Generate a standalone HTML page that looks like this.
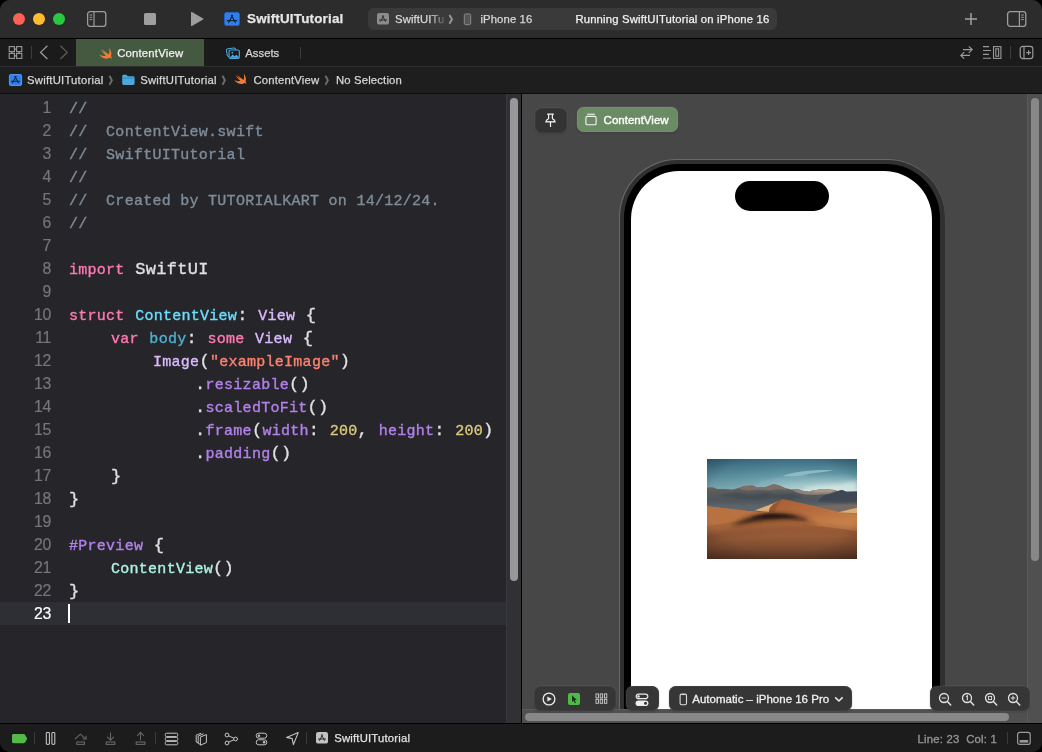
<!DOCTYPE html>
<html>
<head>
<meta charset="utf-8">
<title>Xcode</title>
<style>
html,body{margin:0;padding:0;background:#000;}
body{width:1042px;height:752px;overflow:hidden;position:relative;font-family:"Liberation Sans",sans-serif;}
#win{will-change:transform;position:absolute;left:0;top:0;width:1042px;height:752px;border-radius:10px;overflow:hidden;background:#1c1c1c;}
.abs{position:absolute;}
#titlebar{left:0;top:0;width:1042px;height:38px;background:#2c2c2c;}
#tabbar{left:0;top:39px;width:1042px;height:27px;background:#1b1b1b;}
#jumpbar{left:0;top:67px;width:1042px;height:26px;background:#1e1e1e;}
.hl{background:#000;}
.t{position:absolute;white-space:nowrap;color:#dcdcdc;font-size:11.3px;line-height:14px;-webkit-text-stroke:0.25px currentColor;}
#editor{left:0;top:94px;width:506px;height:630px;background:#25252a;}
#code{position:absolute;left:69px;top:96.5px;font-family:"Liberation Mono",monospace;font-size:17px;letter-spacing:0.3px;line-height:23px;color:#e0e0e0;white-space:pre;-webkit-text-stroke:0.36px currentColor;}
.ln{height:23px;line-height:23px;overflow:visible;}
#code span{font-size:15px;letter-spacing:0.27px;}
#nums{position:absolute;left:0;top:95.9px;width:51px;text-align:right;font-family:"Liberation Sans",sans-serif;font-size:15.8px;letter-spacing:-0.3px;line-height:23px;color:#75757a;white-space:pre;-webkit-text-stroke:0.2px currentColor;}
.c{color:#7f8c98}.k{color:#ff7ab2}.s{color:#ff8170}.n{color:#d9c97c}.td{color:#6bdfff}.od{color:#4eb0cc}.pc{color:#acf2e4}.oc{color:#dabaff}.of{color:#b281eb}
#canvas{left:523px;top:94px;width:519px;height:630px;background:#474747;overflow:hidden;}
.grp{position:absolute;background:#363636;border:1px solid #3d3d3d;border-radius:6.5px;box-sizing:border-box;box-shadow:0 0 0 0.5px rgba(255,255,255,0.10), 0 1px 2px rgba(0,0,0,0.25);}
</style>
</head>
<body>
<div id="win">
  <!-- TITLE BAR -->
  <div id="titlebar" class="abs"></div>
  <div class="abs hl" style="left:0;top:38px;width:1042px;height:1px;"></div>
  <div id="tabbar" class="abs"></div>
  <div class="abs" style="left:0;top:66px;width:1042px;height:1px;background:#2f2f2f;"></div>
  <div id="jumpbar" class="abs"></div>
  <div class="abs" style="left:0;top:93px;width:1042px;height:1px;background:#0c0c0c;"></div>


  <!-- traffic lights -->
  <div class="abs" style="left:13px;top:13px;width:12px;height:12px;border-radius:50%;background:#fe5f57;"></div>
  <div class="abs" style="left:33px;top:13px;width:12px;height:12px;border-radius:50%;background:#febc2e;"></div>
  <div class="abs" style="left:53px;top:13px;width:12px;height:12px;border-radius:50%;background:#28c840;"></div>
  <!-- sidebar icon -->
  <svg class="abs" style="left:86px;top:10px;" width="22" height="18" viewBox="0 0 22 18"><rect x="1.6" y="1.7" width="18.2" height="14.6" rx="2.6" fill="none" stroke="#9d9d9d" stroke-width="1.3"/><line x1="8" y1="1.7" x2="8" y2="16.3" stroke="#9d9d9d" stroke-width="1.2"/><g stroke="#9d9d9d" stroke-width="1"><line x1="3.6" y1="5" x2="6.2" y2="5"/><line x1="3.6" y1="7.3" x2="6.2" y2="7.3"/><line x1="3.6" y1="9.6" x2="6.2" y2="9.6"/></g></svg>
  <!-- stop -->
  <div class="abs" style="left:144px;top:13px;width:12px;height:12px;border-radius:1.5px;background:#9f9f9f;"></div>
  <!-- play -->
  <svg class="abs" style="left:189px;top:10px;" width="18" height="18" viewBox="0 0 18 18"><path d="M2.6 2.6 L13.8 9 L2.6 15.4 Z" fill="#9f9f9f" stroke="#9f9f9f" stroke-width="1.2" stroke-linejoin="round"/></svg>
  <!-- app icon -->
  <svg class="abs" style="left:224px;top:12px;" width="16" height="14" viewBox="0 0 16 14"><rect x="0.5" y="0.5" width="15" height="13" rx="2" fill="#2f80ec" stroke="#1f62c4" stroke-width="1"/><g stroke="#10233f" stroke-width="1.15" fill="none" stroke-linecap="round"><path d="M8.6 3.2 L4.6 10.6"/><path d="M7.4 3.2 L11.4 10.6"/><path d="M3.2 8.6 L12.8 8.6"/></g></svg>
  <div class="t" style="left:247px;top:11px;font-size:13.4px;line-height:16px;font-weight:bold;color:#e6e6e6;letter-spacing:0.2px;">SwiftUITutorial</div>
  <!-- pill -->
  <div class="abs" style="left:368px;top:8px;width:409px;height:22px;border-radius:6px;background:#3a3a3a;"></div>
  <svg class="abs" style="left:377px;top:13px;" width="12" height="12" viewBox="0 0 12 12"><rect x="0" y="0" width="12" height="11.6" rx="2.2" fill="#8c8c8c"/><g stroke="#2e2e2e" stroke-width="1" fill="none" stroke-linecap="round"><path d="M6.5 2.8 L3.5 8.4"/><path d="M5.5 2.8 L8.5 8.4"/><path d="M2.4 7 L9.6 7"/></g></svg>
  <div class="t" style="left:395px;top:12px;letter-spacing:0.1px;color:#d8d8d8;width:50px;overflow:hidden;-webkit-mask-image:linear-gradient(90deg,#000 70%,rgba(0,0,0,0.15) 100%);">SwiftUITu</div>
  <svg class="abs" style="left:447px;top:14px;" width="8" height="11" viewBox="0 0 8 11"><path d="M2.4 0.9 L5 5.3 L2.4 9.7" fill="none" stroke="#959595" stroke-width="2"/></svg>
  <svg class="abs" style="left:463px;top:13px;" width="9" height="13" viewBox="0 0 9 13"><rect x="1.3" y="0.9" width="6.4" height="10.8" rx="1.5" fill="#555" stroke="#8a8a8a" stroke-width="1"/></svg>
  <div class="t" style="left:480.4px;top:12px;letter-spacing:0.12px;color:#d8d8d8;">iPhone 16</div>
  <div class="t" style="left:575.4px;top:12px;letter-spacing:0.17px;color:#f2f2f2;">Running SwiftUITutorial on iPhone 16</div>
  <!-- plus -->
  <svg class="abs" style="left:964px;top:12px;" width="14" height="14" viewBox="0 0 14 14"><path d="M7 1 V12.9 M1 7 H13" stroke="#a2a2a2" stroke-width="1.5" fill="none"/></svg>
  <!-- right sidebar icon -->
  <svg class="abs" style="left:1006px;top:10px;" width="22" height="18" viewBox="0 0 22 18"><rect x="1.6" y="1.7" width="18.2" height="14.6" rx="2.6" fill="none" stroke="#9d9d9d" stroke-width="1.3"/><line x1="13.4" y1="1.7" x2="13.4" y2="16.3" stroke="#9d9d9d" stroke-width="1.2"/><g stroke="#9d9d9d" stroke-width="1"><line x1="15.2" y1="5" x2="17.8" y2="5"/><line x1="15.2" y1="7.3" x2="17.8" y2="7.3"/><line x1="15.2" y1="9.6" x2="17.8" y2="9.6"/></g></svg>

  <!-- tab bar -->
  <svg class="abs" style="left:8px;top:45px;" width="15" height="15" viewBox="0 0 15 15"><g fill="none" stroke="#9a9a9a" stroke-width="1.1"><rect x="1.2" y="1.6" width="5.2" height="5"/><rect x="8.6" y="1.6" width="5.2" height="5"/><rect x="1.2" y="8.4" width="5.2" height="5"/><rect x="8.6" y="8.4" width="5.2" height="5"/><path d="M6.4 4.1 H8.6 M6.4 10.9 H8.6 M3.8 6.6 V8.4 M11.2 6.6 V8.4"/></g></svg>
  <div class="abs" style="left:31px;top:46px;width:1px;height:13px;background:#3c3c3c;"></div>
  <svg class="abs" style="left:39px;top:45px;" width="10" height="15" viewBox="0 0 10 15"><path d="M8.4 0.8 L1.6 7.4 L8.4 14" fill="none" stroke="#9a9a9a" stroke-width="1.3"/></svg>
  <svg class="abs" style="left:59px;top:45px;" width="10" height="15" viewBox="0 0 10 15"><path d="M1.4 0.8 L8.2 7.4 L1.4 14" fill="none" stroke="#5c5c5c" stroke-width="1.3"/></svg>
  <div class="abs" style="left:76px;top:39px;width:128px;height:27px;background:#445940;"></div>
  <svg class="abs" style="left:99.4px;top:46.6px;" width="13" height="12.4" viewBox="0 0 12.6 11.2" preserveAspectRatio="none"><path d="M9.6 0.6 C12 3.2 12.4 6 11.6 8.2 C12.4 9.2 12.3 10.2 12 10.8 C11.3 9.7 10.5 9.6 10 9.8 C8.6 10.7 6.6 10.9 4.6 10.2 C2.8 9.6 1.2 8.2 0.2 6.6 C2.2 8 4.6 8.5 6.6 7.6 C4.6 6 2.8 4 1.5 2.1 C3 3.4 5.2 5 6.2 5.6 C5 4.4 3.6 2.6 2.9 1.5 C4.8 3.3 7.6 5.6 9.6 6.7 C10.4 4.8 10.3 2.6 9.6 0.6 Z" fill="#f27a32"/></svg>
  <div class="t" style="left:117.2px;top:46px;letter-spacing:0.2px;color:#f2f2f2;">ContentView</div>
  <!-- assets icon -->
  <svg class="abs" style="left:226px;top:47px;" width="14.3" height="12.4" viewBox="0 0 15 13"><rect x="0.8" y="1.4" width="9.6" height="8" rx="1.6" transform="rotate(-8 5.6 5.4)" fill="none" stroke="#4aa8dc" stroke-width="1.1"/><rect x="3.2" y="3.2" width="10.8" height="8.8" rx="1.6" fill="#1b1b1b" stroke="#4aa8dc" stroke-width="1.2"/><path d="M3.8 11.4 L7 7.8 L9 9.6 L11 8 L13.4 10.4 V11.4 Z" fill="#4aa8dc"/><circle cx="6.6" cy="6" r="0.9" fill="#4aa8dc"/></svg>
  <div class="t" style="left:245.3px;top:46px;letter-spacing:0px;color:#d4d4d4;">Assets</div>
  <div class="abs" style="left:300px;top:46.5px;width:1px;height:12.5px;background:#3c3c3c;"></div>
  <!-- right icons -->
  <svg class="abs" style="left:959px;top:45px;" width="15" height="15" viewBox="0 0 15 15"><g fill="none" stroke="#9a9a9a" stroke-width="1.15"><path d="M4 4.6 H13 M9.8 1.4 L13.2 4.6 L9.8 7.8"/><path d="M11 10.4 H2 M5.2 7.2 L1.8 10.4 L5.2 13.6"/></g></svg>
  <svg class="abs" style="left:982px;top:45px;" width="21" height="15" viewBox="0 0 21 15"><g fill="none" stroke="#9a9a9a" stroke-width="1.1"><path d="M1 1.6 H7 M1 5.5 H9 M1 9.4 H7 M1 13.3 H9"/><rect x="11.5" y="1.6" width="7.4" height="11.8"/><rect x="13.8" y="3.8" width="2.8" height="7.4"/></g></svg>
  <div class="abs" style="left:1010px;top:46px;width:1px;height:13px;background:#3c3c3c;"></div>
  <svg class="abs" style="left:1019px;top:45px;" width="15" height="15" viewBox="0 0 15 15"><g fill="none" stroke="#9a9a9a" stroke-width="1.2"><rect x="1.2" y="1.4" width="12.6" height="12.2" rx="2.6"/><path d="M5 1.4 V13.6 M9.6 5.2 V10 M7.2 7.6 H12"/></g></svg>

  <!-- jump bar -->
  <svg class="abs" style="left:8px;top:73px;" width="15" height="14" viewBox="0 0 15 14"><rect x="0.9" y="0.9" width="13.2" height="12.2" rx="2" fill="#2f80ec" stroke="#1f62c4" stroke-width="0"/><rect x="1.6" y="1.6" width="11.8" height="10.8" rx="1.4" fill="none" stroke="#6aa8f5" stroke-width="0.6"/><g stroke="#10233f" stroke-width="1.05" fill="none" stroke-linecap="round"><path d="M8 3.4 L4.6 9.8"/><path d="M7 3.4 L10.4 9.8"/><path d="M3.4 8.2 L11.6 8.2"/></g></svg>
  <div class="t" style="left:27px;top:73px;letter-spacing:0.23px;color:#d6d6d6;">SwiftUITutorial</div>
  <svg class="abs" style="left:108px;top:75px;" width="6" height="11" viewBox="0 0 6 11"><path d="M1.5 0.7 L3.9 5.3 L1.5 9.9" fill="none" stroke="#6e6e6e" stroke-width="1.9"/></svg>
  <svg class="abs" style="left:122px;top:74px;" width="13" height="12" viewBox="0 0 13 12"><path d="M0.2 2.2 C0.2 1.4 0.8 0.8 1.6 0.8 H4.4 L5.8 2.2 H11.2 C12 2.2 12.6 2.8 12.6 3.6 V9.6 C12.6 10.4 12 11 11.2 11 H1.6 C0.8 11 0.2 10.4 0.2 9.6 Z" fill="#4aa8dc"/><rect x="0.2" y="3.6" width="12.4" height="0.9" fill="#1d6a9a" opacity="0.55"/></svg>
  <div class="t" style="left:140.2px;top:73px;letter-spacing:0.23px;color:#d6d6d6;">SwiftUITutorial</div>
  <svg class="abs" style="left:221px;top:75px;" width="6" height="11" viewBox="0 0 6 11"><path d="M1.5 0.7 L3.9 5.3 L1.5 9.9" fill="none" stroke="#6e6e6e" stroke-width="1.9"/></svg>
  <svg class="abs" style="left:234.4px;top:73.2px;" width="12.6" height="11.6" viewBox="0 0 12.6 11.2" preserveAspectRatio="none"><path d="M9.6 0.6 C12 3.2 12.4 6 11.6 8.2 C12.4 9.2 12.3 10.2 12 10.8 C11.3 9.7 10.5 9.6 10 9.8 C8.6 10.7 6.6 10.9 4.6 10.2 C2.8 9.6 1.2 8.2 0.2 6.6 C2.2 8 4.6 8.5 6.6 7.6 C4.6 6 2.8 4 1.5 2.1 C3 3.4 5.2 5 6.2 5.6 C5 4.4 3.6 2.6 2.9 1.5 C4.8 3.3 7.6 5.6 9.6 6.7 C10.4 4.8 10.3 2.6 9.6 0.6 Z" fill="#f27a32"/></svg>
  <div class="t" style="left:253.5px;top:73px;letter-spacing:0.17px;color:#d6d6d6;">ContentView</div>
  <svg class="abs" style="left:324px;top:75px;" width="6" height="11" viewBox="0 0 6 11"><path d="M1.5 0.7 L3.9 5.3 L1.5 9.9" fill="none" stroke="#6e6e6e" stroke-width="1.9"/></svg>
  <div class="t" style="left:336px;top:73px;letter-spacing:0.16px;color:#d6d6d6;">No Selection</div>

  <!-- EDITOR -->
  <div id="editor" class="abs"></div>
  <div class="abs" id="curline" style="left:0;top:602px;width:506px;height:23px;background:#2d2f35;"></div>
  <div id="nums">1
2
3
4
5
6
7
8
9
10
11
12
13
14
15
16
17
18
19
20
21
22
<span style="color:#fff">23</span></div>
  <div id="code"><div class="ln"><span class="c">//</span></div><div class="ln"><span class="c">//  ContentView.swift</span></div><div class="ln"><span class="c">//  SwiftUITutorial</span></div><div class="ln"><span class="c">//</span></div><div class="ln"><span class="c">//  Created by TUTORIALKART on 14/12/24.</span></div><div class="ln"><span class="c">//</span></div><div class="ln">&nbsp;</div><div class="ln"><span class="k">import</span> SwiftUI</div><div class="ln">&nbsp;</div><div class="ln"><span class="k">struct</span> <span class="td">ContentView</span>: <span class="oc">View</span> {</div><div class="ln">    <span class="k">var</span> <span class="od">body</span>: <span class="k">some</span> <span class="oc">View</span> {</div><div class="ln">        <span class="oc">Image</span>(<span class="s">"exampleImage"</span>)</div><div class="ln">            .<span class="of">resizable</span>()</div><div class="ln">            .<span class="of">scaledToFit</span>()</div><div class="ln">            .<span class="of">frame</span>(<span class="of">width</span>: <span class="n">200</span>, <span class="of">height</span>: <span class="n">200</span>)</div><div class="ln">            .<span class="of">padding</span>()</div><div class="ln">    }</div><div class="ln">}</div><div class="ln">&nbsp;</div><div class="ln"><span class="of">#Preview</span> {</div><div class="ln">    <span class="pc">ContentView</span>()</div><div class="ln">}</div></div>
  <div class="abs" style="left:68px;top:604px;width:2px;height:19px;background:#fff;"></div>

  <!-- editor scrollbar -->
  <div class="abs" style="left:506px;top:94px;width:15px;height:630px;background:#313135;border-left:1px solid #3a3a3e;box-sizing:border-box;"></div>
  <div class="abs" style="left:510px;top:98px;width:8px;height:483px;border-radius:4px;background:#98989b;"></div>
  <div class="abs hl" style="left:521px;top:94px;width:1px;height:630px;"></div>
  <div class="abs" style="left:522px;top:94px;width:1px;height:615px;background:#474747;"></div>
  <div class="abs" style="left:522px;top:709px;width:1px;height:15px;background:#505050;border-top:1px solid #5a5a5a;box-sizing:border-box;"></div>

  <!-- CANVAS -->

  <div id="canvas" class="abs">
    <!-- pin button -->
    <div class="grp" style="left:11.5px;top:13.5px;width:32px;height:25px;background:#333;border-color:#3a3a3a;"></div>
    <svg class="abs" style="left:21px;top:19px;" width="13" height="15" viewBox="0 0 13 15"><path d="M3.6 1.2 H9.4 M4.6 1.2 V5.6 M8.4 1.2 V5.6 M4.6 5.6 C3 6.4 2 7.6 1.8 9 H11.2 C11 7.6 10 6.4 8.4 5.6" fill="none" stroke="#f0f0f0" stroke-width="1.2" stroke-linejoin="round" stroke-linecap="round"/><path d="M2.2 8.2 H10.8 L11.2 9 H1.8 Z" fill="#f0f0f0"/><path d="M6.5 9 V14" stroke="#f0f0f0" stroke-width="1.2"/></svg>
    <!-- ContentView button -->
    <div class="grp" style="left:54px;top:13.2px;width:101px;height:25.3px;background:#6b8b64;border-color:#73916c;"></div>
    <svg class="abs" style="left:62px;top:19.4px;" width="12" height="13" viewBox="0 0 12 13"><path d="M2.2 1.2 H9.8" stroke="#f4f4f4" stroke-width="1.1" fill="none"/><rect x="0.9" y="3.4" width="10.2" height="8.4" rx="1.3" fill="none" stroke="#f4f4f4" stroke-width="1.1"/></svg>
    <div class="t" style="left:80.6px;top:18.6px;font-size:11.5px;letter-spacing:0px;color:#fcfcfc;-webkit-text-stroke:0.4px currentColor;">ContentView</div>

    <!-- phone -->
    <div class="abs" style="left:96.4px;top:65.4px;width:325.8px;height:640px;border-radius:58px;background:#686868;"></div>
    <div class="abs" style="left:96.9px;top:65.9px;width:324.8px;height:640px;border-radius:57.5px;background:#303030;"></div>
    <div class="abs" style="left:100.5px;top:69.5px;width:316.4px;height:640px;border-radius:54px;background:#000;"></div>
    <div class="abs" style="left:108px;top:77.4px;width:301px;height:640px;border-radius:48px;background:#fff;"></div>
    <div class="abs" style="left:211.8px;top:87px;width:94.2px;height:29.5px;border-radius:15px;background:#000;"></div>

    <svg class="abs" style="left:184px;top:365px;" width="150" height="100" viewBox="0 0 150 100">
      <defs>
        <linearGradient id="sky" x1="0" y1="0" x2="0" y2="1"><stop offset="0" stop-color="#3b6b80"/><stop offset="0.35" stop-color="#5c93a3"/><stop offset="0.7" stop-color="#88b7be"/><stop offset="1" stop-color="#a4c9ca"/></linearGradient>
        <radialGradient id="skyl" cx="0.8" cy="0.95" r="0.6"><stop offset="0" stop-color="#d5e6e3" stop-opacity="0.95"/><stop offset="1" stop-color="#c4dcdb" stop-opacity="0"/></radialGradient>
        <linearGradient id="skyd" x1="0" y1="0" x2="1" y2="0"><stop offset="0" stop-color="#1d3f58" stop-opacity="0.22"/><stop offset="0.5" stop-color="#1d3f58" stop-opacity="0"/></linearGradient>
        <linearGradient id="mtn" x1="0" y1="0" x2="0" y2="1"><stop offset="0" stop-color="#70665f"/><stop offset="0.3" stop-color="#565a5e"/><stop offset="0.7" stop-color="#4b535b"/><stop offset="1" stop-color="#5f656a"/></linearGradient>
        <linearGradient id="sand" x1="0" y1="0" x2="0" y2="1"><stop offset="0" stop-color="#b87242"/><stop offset="0.25" stop-color="#ad693c"/><stop offset="0.55" stop-color="#9a5d37"/><stop offset="0.8" stop-color="#7a4a2f"/><stop offset="1" stop-color="#5b3625"/></linearGradient>
        <linearGradient id="dune" x1="0" y1="0" x2="1" y2="0.6"><stop offset="0" stop-color="#a45c35"/><stop offset="0.5" stop-color="#b56b3d"/><stop offset="1" stop-color="#c58049"/></linearGradient>
        <radialGradient id="vig" cx="0.5" cy="0.45" r="0.8"><stop offset="0.62" stop-color="#000" stop-opacity="0"/><stop offset="1" stop-color="#000" stop-opacity="0.3"/></radialGradient>
        <filter id="b1" x="-20%" y="-20%" width="140%" height="140%"><feGaussianBlur stdDeviation="0.5"/></filter>
        <filter id="b15" x="-20%" y="-40%" width="140%" height="180%"><feGaussianBlur stdDeviation="1.1"/></filter>
        <filter id="b2" x="-30%" y="-60%" width="160%" height="220%"><feGaussianBlur stdDeviation="2"/></filter>
        <filter id="b3" x="-30%" y="-60%" width="160%" height="220%"><feGaussianBlur stdDeviation="3.5"/></filter>
        <clipPath id="clipimg"><rect x="0" y="0" width="150" height="100"/></clipPath>
      </defs>
      <g clip-path="url(#clipimg)">
        <rect width="150" height="40" fill="url(#sky)"/>
        <rect width="150" height="40" fill="url(#skyd)"/>
        <rect width="150" height="40" fill="url(#skyl)"/>
        <path d="M76 16.5 C90 12 108 10.5 127 11 C118 13.2 106 13.8 98 15.8 C92 17.4 82 18 76 16.5 Z" fill="#a5c9d2" opacity="0.7" filter="url(#b1)"/>
        <path d="M52 24 C70 20 86 17.5 100 17" stroke="#8fbac6" stroke-width="2.5" fill="none" opacity="0.35" filter="url(#b15)"/>
        <path d="M96 30 C112 25 130 27 150 22 L150 34 L96 34 Z" fill="#d6e6e3" opacity="0.85" filter="url(#b2)"/>
        <!-- mountains -->
        <path d="M0 28.5 L5.7 28.2 L10.3 30 L18 30 L25.7 30.5 L31.8 28.9 L36.5 27.1 L45.7 26.6 L50.3 28.5 L59.5 27.8 L66.5 25.1 L71.8 26.3 L78 28.9 L84.2 30.5 L90.3 30 L96.5 32 L102.6 32.8 L105.7 31.5 L116.5 30 L127.2 30.9 L130.3 32 L134.9 30.9 L139.5 32.8 L150 32.5 L150 56 L0 56 Z" fill="url(#mtn)"/>
        <path d="M31.8 28.9 L36.5 27.1 L45.7 26.6 L50.3 28.5 L59.5 27.8 L66.5 25.1 L71.8 26.3 L78 28.9 L80 31 L70 30 L62 31.5 L52 30.5 L42 31.5 L34 30.5 Z" fill="#80716a" opacity="0.9" filter="url(#b1)"/>
        <path d="M84 30.6 L90.3 30 L96.5 32 L102.6 32.8 L105.7 31.5 L116.5 30 L127.2 30.9 L130 32 L126 34.5 L110 35.8 L98 35.5 L90 33.5 Z" fill="#93857b" opacity="0.95" filter="url(#b1)"/>
        <path d="M104 31.8 L116.5 30 L127 31 L124 33 L108 33.6 Z" fill="#a89a8c" opacity="0.9" filter="url(#b1)"/>
        <path d="M116 37 L128 33 L134.9 30.9 L139.5 32.8 L150 32.5 L150 46 L110 43 Z" fill="#3c4752" opacity="0.95" filter="url(#b1)"/>
        <path d="M10 36 L30 33.5 L44 36 L58 33 L70 35.5 L84 34 L96 38 L84 40.5 L66 39 L50 41 L30 39.5 Z" fill="#3b444e" opacity="0.55" filter="url(#b15)"/>
        <path d="M0 33 L12 31.5 L22 33.5 L12 35.5 L0 36 Z" fill="#5d5a5a" opacity="0.6" filter="url(#b1)"/>
        <rect x="-5" y="44.5" width="160" height="8" fill="#62676d" opacity="0.9" filter="url(#b2)"/>
        <path d="M100 47.5 L150 44.5 L150 52 L122 53 Z" fill="#7a6c63" opacity="0.85" filter="url(#b15)"/>
        <!-- sand base -->
        <path d="M0 47.2 L18 49.3 L41 52 L60 53.2 L150 53.2 L150 100 L0 100 Z" fill="url(#sand)"/>
        <!-- main dune right face -->
        <path d="M75.7 40.3 C88 42.6 108 47.5 133 53 L150 56 L150 72 L58 60 L61 50 C63 46 68 43 75.7 40.3 Z" fill="url(#dune)"/>
        <path d="M62 53 C61.5 49 65 44.5 75.7 40.3 C72 44 68.5 48 68 53 Z" fill="#8a4b2c" opacity="0.55" filter="url(#b1)"/>
        <!-- lit left face -->
        <path d="M75.7 40.3 C70 43 58 48 47.5 51.3 L56 52.6 L62 53 C61.5 49 65 44.5 75.7 40.3 Z" fill="#ddb07b"/>
        <!-- right small lit dune -->
        <path d="M131 53.2 C139 51.4 146 49.8 150 48.8 L150 54.2 Z" fill="#d9ac77"/>
        <!-- left dune -->
        <path d="M0 47.2 L18 49.3 L41 52 L62 53.4 L44 60 L0 67 Z" fill="#b97342" opacity="0.95" filter="url(#b1)"/>
        <!-- shadow band -->
        <path d="M24 67 C36 59.5 50 54.6 66 54.4 C82 54.2 96 57 110 64.5 C96 61 82 60.2 70 60.8 C54 61.6 40 64 24 67 Z" fill="#2b1d19" opacity="0.95" filter="url(#b2)"/>
        <path d="M44 58.8 C54 54.8 70 54 90 57.4 C78 58 58 58.6 44 58.8 Z" fill="#1c1210" opacity="0.85" filter="url(#b15)"/>
        <!-- lighter swath + lower sweep -->
        <path d="M-5 72 C30 82 90 76 155 71 L155 65 C100 71 40 72 -5 66 Z" fill="#c07d4a" opacity="0.3" filter="url(#b3)"/>
        <path d="M-5 74 C30 69 80 66 155 70 L155 75 C90 72 40 75 -5 82 Z" fill="#63392a" opacity="0.45" filter="url(#b3)"/>
        <path d="M100 58 C120 58 140 60 155 63 L155 70 C135 66 115 63 100 63 Z" fill="#c98550" opacity="0.45" filter="url(#b2)"/>
        <rect width="150" height="100" fill="url(#vig)"/>
      </g>
    </svg>

    <!-- scroll tracks -->
    <div class="abs" style="left:0;top:615px;width:519px;height:15px;background:#505050;border-top:1px solid #5a5a5a;box-sizing:border-box;"></div>
    <div class="abs" style="left:504px;top:0;width:15px;height:630px;background:#505050;border-left:1px solid #5a5a5a;box-sizing:border-box;"></div>
    <div class="abs" style="left:2px;top:619px;width:484px;height:8px;border-radius:4px;background:#888;"></div>
    <div class="abs" style="left:508px;top:4px;width:8px;height:463px;border-radius:4px;background:#888;"></div>

    <!-- bottom toolbars -->
    <div class="grp" style="left:11.2px;top:592.3px;width:81.4px;height:25.2px;"></div>
    <div class="grp" style="left:103px;top:592.3px;width:32.9px;height:25.2px;"></div>
    <div class="grp" style="left:146.4px;top:592.3px;width:182.2px;height:25.2px;"></div>
    <div class="grp" style="left:407px;top:592.3px;width:99.8px;height:25.2px;"></div>

    <!-- group1 icons -->
    <svg class="abs" style="left:19.3px;top:598.1px;" width="14" height="14" viewBox="0 0 14 14"><circle cx="7" cy="7" r="5.9" fill="none" stroke="#ececec" stroke-width="1.3"/><path d="M5.4 4.4 L9.8 7 L5.4 9.6 Z" fill="#ececec"/></svg>
    <div class="abs" style="left:45.2px;top:599.3px;width:11.8px;height:11.6px;border-radius:2px;background:#4fb848;"></div>
    <svg class="abs" style="left:45.2px;top:599.3px;" width="12" height="12" viewBox="0 0 12 12"><path d="M4 2.2 L4 9 L5.6 7.5 L6.8 10.2 L7.9 9.7 L6.8 7.1 L8.9 7 Z" fill="#17331a"/></svg>
    <svg class="abs" style="left:71.6px;top:599.2px;" width="14" height="12" viewBox="0 0 14 12"><g fill="none" stroke="#cfcfcf" stroke-width="0.9"><rect x="1" y="0.9" width="2.4" height="4"/><rect x="5.2" y="0.9" width="2.4" height="4"/><rect x="9.4" y="0.9" width="2.4" height="4"/><rect x="1" y="6.3" width="2.4" height="4"/><rect x="5.2" y="6.3" width="2.4" height="4"/><rect x="9.4" y="6.3" width="2.4" height="4"/></g></svg>
    <!-- group2 icon -->
    <svg class="abs" style="left:111.9px;top:598.6px;" width="14" height="14" viewBox="0 0 14 14"><rect x="1.2" y="1.1" width="11.6" height="4.6" rx="2.3" fill="none" stroke="#ececec" stroke-width="1.2"/><circle cx="3.6" cy="3.4" r="1.2" fill="#ececec"/><rect x="0.6" y="7.4" width="12.8" height="5.6" rx="2.8" fill="#ececec"/><circle cx="10.5" cy="10.2" r="1.5" fill="#353535"/></svg>
    <!-- group3 -->
    <svg class="abs" style="left:155.5px;top:598.8px;" width="9" height="13" viewBox="0 0 9 13"><rect x="1.1" y="1.1" width="6.4" height="10.6" rx="1.4" fill="none" stroke="#dedede" stroke-width="1.1"/><path d="M3 1.6 H5.6" stroke="#dedede" stroke-width="1"/></svg>
    <div class="t" style="left:169.3px;top:597.6px;font-size:11.5px;letter-spacing:0px;color:#f0f0f0;-webkit-text-stroke:0.3px currentColor;">Automatic – iPhone 16 Pro</div>
    <svg class="abs" style="left:311px;top:602px;" width="10" height="7" viewBox="0 0 10 7"><path d="M1.2 1.4 L4.9 5 L8.6 1.4" fill="none" stroke="#ececec" stroke-width="1.5"/></svg>
    <!-- group4 -->
    <svg class="abs" style="left:415.2px;top:598px;" width="15" height="15" viewBox="0 0 15 15"><circle cx="6" cy="6" r="4.5" fill="none" stroke="#e2e2e2" stroke-width="1.3"/><path d="M9.4 9.4 L12.7 12.9" stroke="#e2e2e2" stroke-width="1.5" stroke-linecap="round"/><path d="M3.8 6 H8.2" stroke="#e2e2e2" stroke-width="1"/></svg>
    <svg class="abs" style="left:438.2px;top:598px;" width="15" height="15" viewBox="0 0 15 15"><circle cx="6" cy="6" r="4.5" fill="none" stroke="#e2e2e2" stroke-width="1.3"/><path d="M9.4 9.4 L12.7 12.9" stroke="#e2e2e2" stroke-width="1.5" stroke-linecap="round"/><path d="M5 4.6 L6.3 3.7 V8.3" fill="none" stroke="#e2e2e2" stroke-width="1.1"/></svg>
    <svg class="abs" style="left:461.2px;top:598px;" width="15" height="15" viewBox="0 0 15 15"><circle cx="6" cy="6" r="4.5" fill="none" stroke="#e2e2e2" stroke-width="1.3"/><path d="M9.4 9.4 L12.7 12.9" stroke="#e2e2e2" stroke-width="1.5" stroke-linecap="round"/><rect x="4.4" y="4.4" width="3.2" height="3.2" fill="none" stroke="#e2e2e2" stroke-width="0.9"/></svg>
    <svg class="abs" style="left:484.2px;top:598px;" width="15" height="15" viewBox="0 0 15 15"><circle cx="6" cy="6" r="4.5" fill="none" stroke="#e2e2e2" stroke-width="1.3"/><path d="M9.4 9.4 L12.7 12.9" stroke="#e2e2e2" stroke-width="1.5" stroke-linecap="round"/><path d="M3.8 6 H8.2 M6 3.8 V8.2" stroke="#e2e2e2" stroke-width="1"/></svg>
  </div>

  <!-- STATUS BAR -->
  <div class="abs hl" style="left:0;top:723px;width:1042px;height:1px;"></div>
  <div class="abs" id="statusbar" style="left:0;top:724px;width:1042px;height:28px;background:#1c1c1c;"></div>

  <!-- status bar icons -->
  <svg class="abs" style="left:12px;top:734px;" width="16" height="10" viewBox="0 0 16 10"><path d="M1.6 0 H11.6 C12.2 0 12.7 0.3 13 0.8 L14.9 4 C15.2 4.6 15.2 5 14.9 5.6 L13 8.4 C12.7 8.9 12.2 9.2 11.6 9.2 H1.6 C0.7 9.2 0 8.5 0 7.6 V1.6 C0 0.7 0.7 0 1.6 0 Z" fill="#54b948"/></svg>
  <div class="abs" style="left:34px;top:732px;width:1px;height:12px;background:#3a3a3a;"></div>
  <svg class="abs" style="left:45px;top:731px;" width="11" height="15" viewBox="0 0 11 15"><g fill="none" stroke="#d2d2d2" stroke-width="1"><rect x="1.3" y="1.5" width="3.1" height="11.8" rx="0.3"/><rect x="6.9" y="1.5" width="2.9" height="11.8" rx="0.3"/></g></svg>
  <svg class="abs" style="left:74px;top:732px;" width="14" height="14" viewBox="0 0 14 14"><g fill="none" stroke="#666" stroke-width="1.1"><path d="M1 7 L6.4 2.2 L11.6 6.8"/><path d="M8.6 7 H12 V3.8"/><rect x="2.8" y="10" width="7.6" height="2.4"/></g></svg>
  <svg class="abs" style="left:104px;top:731px;" width="13" height="15" viewBox="0 0 13 15"><g fill="none" stroke="#666" stroke-width="1.1"><path d="M6.5 1.4 V9 M3.2 5.8 L6.5 9.2 L9.8 5.8"/><rect x="2.2" y="11" width="8.6" height="2.4"/></g></svg>
  <svg class="abs" style="left:134px;top:731px;" width="13" height="15" viewBox="0 0 13 15"><g fill="none" stroke="#666" stroke-width="1.1"><path d="M6.5 9.2 V1.6 M3.2 4.8 L6.5 1.4 L9.8 4.8"/><rect x="2.2" y="11" width="8.6" height="2.4"/></g></svg>
  <div class="abs" style="left:155px;top:732px;width:1px;height:12px;background:#3a3a3a;"></div>
  <svg class="abs" style="left:164px;top:732px;" width="15" height="14" viewBox="0 0 15 14"><g fill="none" stroke="#c4c4c4" stroke-width="1"><rect x="1.3" y="1.2" width="12.4" height="3.4" rx="1.2"/><rect x="1.3" y="5.3" width="12.4" height="3.4" rx="1.2"/><rect x="1.3" y="9.4" width="12.4" height="3.4" rx="1.2"/></g></svg>
  <svg class="abs" style="left:195px;top:731.5px;" width="13" height="15" viewBox="0 0 13 15"><g fill="none" stroke="#c4c4c4" stroke-width="1" stroke-linejoin="round"><path d="M5.4 5 L11.4 2.6 V10.6 L5.4 13.2 Z"/><path d="M3.2 4 L8.6 1.8 M3.2 4 V11.4 L5.4 12.4"/><path d="M1.2 3.2 L6.2 1.2 M1.2 3.2 V10 L3.2 10.9"/></g></svg>
  <svg class="abs" style="left:224px;top:731.5px;" width="15" height="14" viewBox="0 0 15 14"><g fill="none" stroke="#c4c4c4" stroke-width="1"><circle cx="3" cy="3" r="1.9"/><circle cx="3" cy="11" r="1.9"/><circle cx="11.6" cy="7" r="1.9"/><path d="M4.7 3.9 L9.9 6.2 M4.7 10.1 L9.9 7.8"/></g></svg>
  <svg class="abs" style="left:255px;top:731.5px;" width="13" height="14" viewBox="0 0 13 14"><g fill="none" stroke="#c4c4c4" stroke-width="1"><rect x="1.2" y="1.2" width="10.6" height="5" rx="2.5"/><rect x="1.2" y="7.8" width="10.6" height="5" rx="2.5"/></g><circle cx="3.9" cy="3.7" r="1.2" fill="#c4c4c4"/><circle cx="9.1" cy="10.3" r="1.2" fill="#c4c4c4"/></svg>
  <svg class="abs" style="left:284.5px;top:731px;" width="15" height="15" viewBox="0 0 15 15"><path d="M13.2 1.6 L1.6 6.4 L7.2 7.6 L8.4 13.6 Z" fill="none" stroke="#c4c4c4" stroke-width="1.1" stroke-linejoin="round"/></svg>
  <div class="abs" style="left:306px;top:732px;width:1px;height:12px;background:#3a3a3a;"></div>
  <svg class="abs" style="left:316px;top:732px;" width="12" height="12" viewBox="0 0 12 12"><rect x="0" y="0" width="12" height="11.6" rx="2.2" fill="#c2c2c2"/><g stroke="#2a2a2a" stroke-width="1" fill="none" stroke-linecap="round"><path d="M6.5 2.8 L3.5 8.4"/><path d="M5.5 2.8 L8.5 8.4"/><path d="M2.4 7 L9.6 7"/></g></svg>
  <div class="t" style="left:334.2px;top:731px;letter-spacing:0.2px;color:#e2e2e2;">SwiftUITutorial</div>
  <div class="t" style="left:917.5px;top:731.5px;letter-spacing:0.22px;color:#939393;-webkit-text-stroke:0.35px currentColor;white-space:pre;">Line: 23  Col: 1</div>
  <div class="abs" style="left:1007px;top:732px;width:1px;height:12px;background:#3a3a3a;"></div>
  <svg class="abs" style="left:1016px;top:731px;" width="16" height="15" viewBox="0 0 16 15"><rect x="1.6" y="1.4" width="12.6" height="12" rx="2.2" fill="none" stroke="#9a9a9a" stroke-width="1.2"/><rect x="3.6" y="9" width="8.6" height="2.6" fill="#9a9a9a"/></svg>
</div>
</body>
</html>
